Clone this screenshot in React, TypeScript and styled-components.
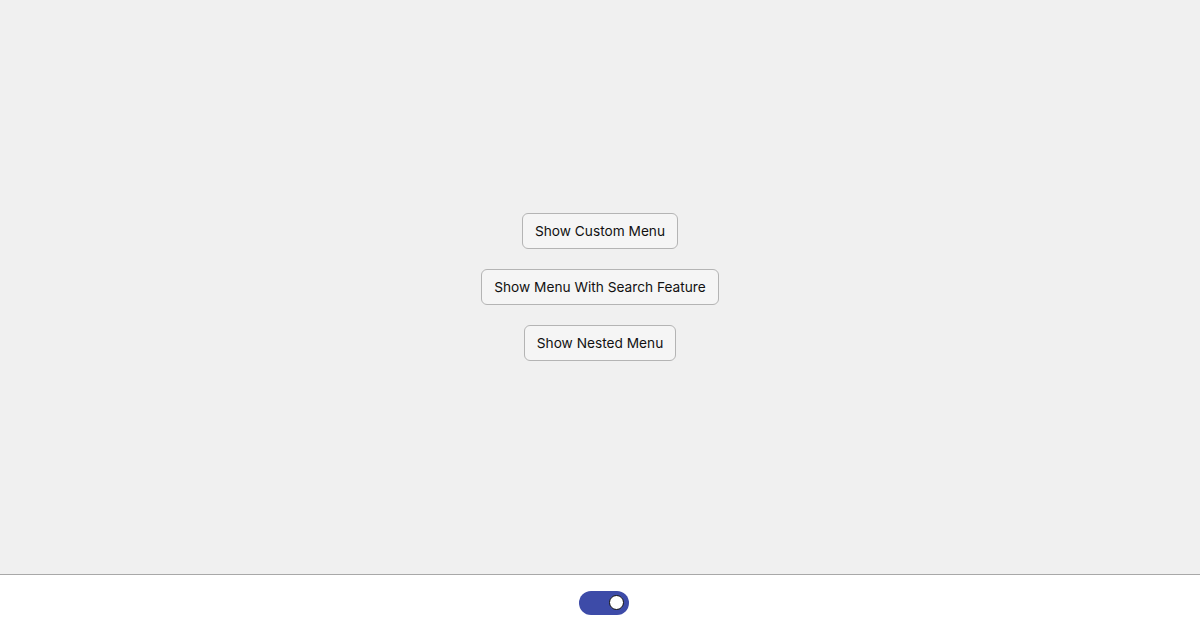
import React from "react";
import styled, { createGlobalStyle } from "styled-components";

const Global = createGlobalStyle`
  html, body { margin: 0; padding: 0; }
  body { font-family: Inter, "Noto Sans", sans-serif; background: #ffffff; }
`;

const Page = styled.div`
  display: flex;
  flex-direction: column;
  height: 630px;
  width: 1200px;
`;

const Main = styled.main`
  flex: 0 0 574px;
  box-sizing: content-box;
  background: #f0f0f0;
  display: flex;
  flex-direction: column;
  align-items: center;
  justify-content: center;
  gap: 20px;
  border-bottom: 1px solid #a8a8a8;
`;

const Button = styled.button`
  height: 36px;
  padding: 0 12px;
  border: 1px solid #b4b4b4;
  border-radius: 6px;
  background: #f5f5f5;
  font-family: Inter, "Noto Sans", sans-serif;
  font-size: 13.7px;
  color: #111;
  cursor: pointer;
`;

const Footer = styled.footer`
  flex: 1;
  background: #fff;
  display: flex;
  justify-content: center;
  align-items: center;
`;

const Toggle = styled.div`
  width: 50px;
  height: 24px;
  margin-left: 8px;
  border-radius: 12px;
  background: #3d4ba8;
  display: flex;
  align-items: center;
  justify-content: flex-end;
  padding: 0 5px;
  box-sizing: border-box;
`;

const Knob = styled.div`
  width: 15px;
  height: 15px;
  border-radius: 50%;
  background: #fff;
  border: 1.5px solid #111;
  box-sizing: border-box;
`;

export default function App() {
  return (
    <Page>
      <Global />
      <Main>
        <Button>Show Custom Menu</Button>
        <Button>Show Menu With Search Feature</Button>
        <Button>Show Nested Menu</Button>
      </Main>
      <Footer>
        <Toggle>
          <Knob />
        </Toggle>
      </Footer>
    </Page>
  );
}
